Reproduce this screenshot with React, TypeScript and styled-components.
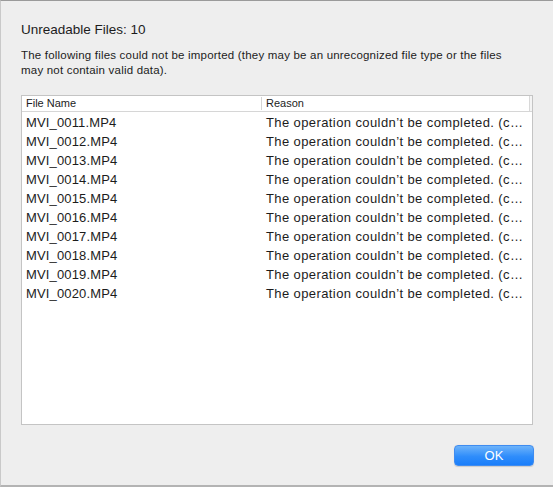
import styled, { createGlobalStyle } from "styled-components";

const GlobalStyle = createGlobalStyle`
  html, body {
    margin: 0;
    padding: 0;
    background: #eeeeee;
  }
  * {
    box-sizing: border-box;
  }
`;

const files = [
  "MVI_0011.MP4",
  "MVI_0012.MP4",
  "MVI_0013.MP4",
  "MVI_0014.MP4",
  "MVI_0015.MP4",
  "MVI_0016.MP4",
  "MVI_0017.MP4",
  "MVI_0018.MP4",
  "MVI_0019.MP4",
  "MVI_0020.MP4",
];

const reason = "The operation couldn\u2019t be completed. (c\u2026";

export default function App() {
  return (
    <>
      <GlobalStyle />
      <Sheet>
        <Title>Unreadable Files: {files.length}</Title>
        <Message>
          The following files could not be imported (they may be an unrecognized file type or the files
          may not contain valid data).
        </Message>
        <Table>
          <HeaderRow>
            <HeaderCell $width={239}>File Name</HeaderCell>
            <HeaderCell $divider>Reason</HeaderCell>
            <HeaderCorner />
          </HeaderRow>
          <Body>
            {files.map((name) => (
              <Row key={name}>
                <Cell $width={239} $spacing={0.15}>
                  {name}
                </Cell>
                <Cell $pad={5} $spacing={0.4}>
                  {reason}
                </Cell>
              </Row>
            ))}
          </Body>
        </Table>
        <Footer>
          <OkButton type="button">OK</OkButton>
        </Footer>
      </Sheet>
    </>
  );
}

const Sheet = styled.div`
  width: 553px;
  height: 487px;
  display: flex;
  flex-direction: column;
  padding: 21px 20px 0 20px;
  background: #eeeeee;
  border-top: 1px solid #9a9a9a;
  border-left: 1px solid #c9c9c9;
  border-bottom: 2px solid #b3b3b3;
  font-family: "Liberation Sans", Arial, sans-serif;
  color: #1c1c1c;
`;

const Title = styled.div`
  font-size: 13.5px;
  line-height: 16px;
  height: 16px;
`;

const Message = styled.div`
  margin-top: 10px;
  max-width: 505px;
  font-size: 11.5px;
  line-height: 15px;
  letter-spacing: 0.2px;
`;

const Table = styled.div`
  margin-top: 17px;
  height: 330px;
  display: flex;
  flex-direction: column;
  background: #ffffff;
  border: 1px solid #c4c4c4;
`;

const HeaderRow = styled.div`
  display: flex;
  height: 16px;
  border-bottom: 1px solid #d6d6d6;
  font-size: 11px;
  line-height: 15px;
`;

const HeaderCell = styled.div<{ $width?: number; $divider?: boolean }>`
  ${(p) => (p.$width ? `width: ${p.$width}px; flex: none;` : "flex: 1;")}
  padding-left: 4px;
  border-left: ${(p) => (p.$divider ? "1px solid #d4d4d4" : "none")};
  margin: ${(p) => (p.$divider ? "1px 0" : "0")};
  line-height: ${(p) => (p.$divider ? "13px" : "15px")};
  white-space: nowrap;
  overflow: hidden;
`;

const HeaderCorner = styled.div`
  width: 3px;
  flex: none;
  border-left: 1px solid #d8d8d8;
  background: #f4f4f4;
`;

const Body = styled.div`
  flex: 1;
  padding-top: 1px;
`;

const Row = styled.div`
  display: flex;
  height: 19px;
  align-items: center;
  font-size: 13px;
`;

const Cell = styled.div<{ $width?: number; $pad?: number; $spacing?: number }>`
  ${(p) => (p.$width ? `width: ${p.$width}px; flex: none;` : "flex: 1;")}
  padding-left: ${(p) => p.$pad ?? 4}px;
  letter-spacing: ${(p) => p.$spacing ?? 0}px;
  white-space: nowrap;
  overflow: hidden;
`;

const Footer = styled.div`
  display: flex;
  justify-content: flex-end;
  margin-top: 20px;
`;

const OkButton = styled.button`
  width: 80px;
  height: 21px;
  margin-right: -1px;
  padding: 0;
  border: 1px solid #3f8cf0;
  border-radius: 4px;
  background: linear-gradient(#6db3fa, #2f8dfb 55%, #1a7efa);
  color: #ffffff;
  font-family: "Liberation Sans", Arial, sans-serif;
  font-size: 13px;
  line-height: 19px;
  box-shadow: 0 0.5px 1px rgba(0, 0, 0, 0.15);
`;
